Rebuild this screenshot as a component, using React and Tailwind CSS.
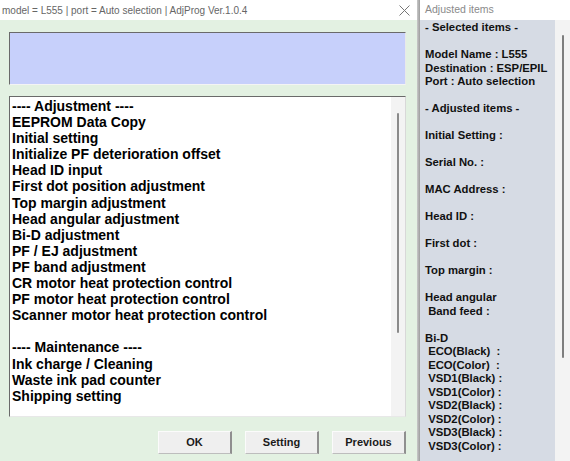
import React from 'react';

const adjustItems = [
  '---- Adjustment ----',
  'EEPROM Data Copy',
  'Initial setting',
  'Initialize PF deterioration offset',
  'Head ID input',
  'First dot position adjustment',
  'Top margin adjustment',
  'Head angular adjustment',
  'Bi-D adjustment',
  'PF / EJ adjustment',
  'PF band adjustment',
  'CR motor heat protection control',
  'PF motor heat protection control',
  'Scanner motor heat protection control',
  '',
  '---- Maintenance ----',
  'Ink charge / Cleaning',
  'Waste ink pad counter',
  'Shipping setting',
];

const summaryLines = [
  '- Selected items -',
  '',
  'Model Name : L555',
  'Destination : ESP/EPIL',
  'Port : Auto selection',
  '',
  '- Adjusted items -',
  '',
  'Initial Setting :',
  '',
  'Serial No. :',
  '',
  'MAC Address :',
  '',
  'Head ID :',
  '',
  'First dot :',
  '',
  'Top margin :',
  '',
  'Head angular',
  ' Band feed :',
  '',
  'Bi-D',
  ' ECO(Black)  :',
  ' ECO(Color)  :',
  ' VSD1(Black) :',
  ' VSD1(Color) :',
  ' VSD2(Black) :',
  ' VSD2(Color) :',
  ' VSD3(Black) :',
  ' VSD3(Color) :',
];

const WinButton = ({ label, width }) => (
  <button
    className={`${width} h-[23px] bg-[#efefef] border-t border-l border-t-[#fbfbfb] border-l-[#fbfbfb] border-r-2 border-b border-r-[#8f8f8f] border-b-[#bdbdbd] text-[11px] font-bold text-[#1a1a1a]`}
  >
    {label}
  </button>
);

const App = () => {
  return (
    <div className="flex w-[570px] h-[461px] overflow-hidden bg-white font-['Liberation_Sans',Arial,sans-serif]">
      {/* Main adjustment window */}
      <div className="flex w-[417px] flex-col">
        <div className="flex h-[20px] items-center justify-between bg-white pl-[2px] pr-[7px]">
          <span className="text-[10px] text-[#666] whitespace-pre">
            model = L555 | port = Auto selection | AdjProg Ver.1.0.4
          </span>
          <svg width="11" height="11" viewBox="0 0 11 11" className="mt-[1px]">
            <path d="M0.5 0.5 L10.5 10.5 M10.5 0.5 L0.5 10.5" stroke="#767676" strokeWidth="1" fill="none" />
          </svg>
        </div>

        <div className="flex flex-1 flex-col bg-[#e3f1e2] pl-[9px] pr-[11px] pt-[12px]">
          <div className="h-[53px] bg-[#c7d0fb] border-t border-l border-t-[#6a6a6a] border-l-[#6a6a6a] border-r border-b border-r-[#e9e9e9] border-b-[#f4f4f4]" />

          <div className="mt-[11px] flex h-[321px] bg-white border-t border-l border-t-[#6a6a6a] border-l-[#6a6a6a] border-r border-b border-r-[#d8d8d8] border-b-[#e8e8e8]">
            <div className="flex-1 pl-[2px] pt-[1px] text-[14px] font-bold leading-[16.1px] text-black">
              {adjustItems.map((item, i) => (
                <div key={i} className="h-[16.1px] whitespace-pre">{item}</div>
              ))}
            </div>
            <div className="flex w-[14px] justify-center bg-[#f3f3f3] pt-[16px]">
              <div className="h-[220px] w-[2px] rounded-full bg-[#8a8a8a]" />
            </div>
          </div>

          <div className="mt-[14px] flex justify-end gap-[13px]">
            <WinButton label="OK" width="w-[74px]" />
            <WinButton label="Setting" width="w-[74px]" />
            <WinButton label="Previous" width="w-[74px]" />
          </div>
        </div>
      </div>

      {/* Window edge */}
      <div className="w-[3px] bg-gradient-to-r from-[#c9c9c9] to-[#9d9d9d]" />

      {/* Adjusted items window */}
      <div className="flex flex-1 flex-col rounded-tr-[7px] bg-white">
        <div className="flex h-[20px] items-center pl-[5px]">
          <span className="text-[10.5px] text-[#8a8a8a]">Adjusted items</span>
        </div>
        <div className="flex flex-1">
          <div className="flex-1 bg-[#d6dbe4] pl-[5px] pt-[1px] text-[11.3px] font-bold leading-[13.5px] text-[#111]">
            {summaryLines.map((line, i) => (
              <div key={i} className="h-[13.5px] whitespace-pre">{line}</div>
            ))}
          </div>
          <div className="flex w-[15px] justify-center bg-[#f3f3f3] pt-[15px]">
            <div className="h-[323px] w-[2px] rounded-full bg-[#7e7e7e]" />
          </div>
        </div>
      </div>
    </div>
  );
};

export default App;
